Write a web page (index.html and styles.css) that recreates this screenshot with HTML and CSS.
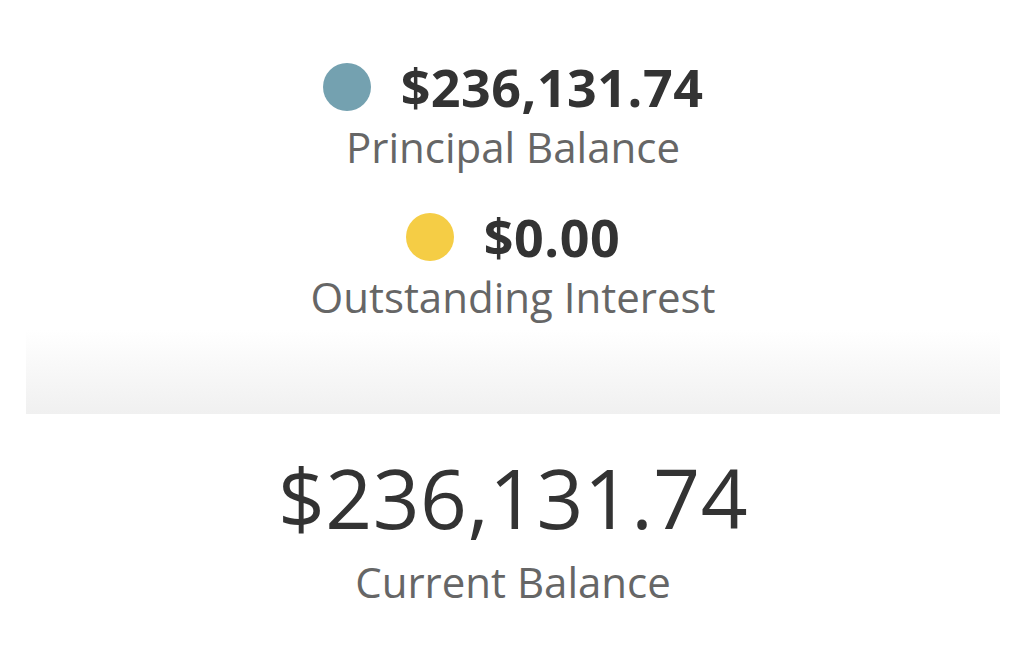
FILE: index.html
```html
<!DOCTYPE html>
<html lang="en">
<head>
    <meta charset="UTF-8">
    <meta name="viewport" content="width=device-width, initial-scale=1.0">
    <title>Loan Balance</title>
    <link rel="stylesheet" href="styles.css">
</head>
<body>
    <div class="summary">
        <div class="breakdown">
            <div class="item">
                <div class="amount-row">
                    <span class="dot principal"></span>
                    <span class="amount">$236,131.74</span>
                </div>
                <div class="label">Principal Balance</div>
            </div>
            <div class="item">
                <div class="amount-row">
                    <span class="dot interest"></span>
                    <span class="amount">$0.00</span>
                </div>
                <div class="label">Outstanding Interest</div>
            </div>
        </div>
        <div class="divider"></div>
        <div class="total">
            <div class="total-amount">$236,131.74</div>
            <div class="label">Current Balance</div>
        </div>
    </div>
</body>
</html>
```

FILE: styles.css
```css
body {
    font-family: "Open Sans", "Liberation Sans", sans-serif;
    background-color: #fff;
    margin: 0;
    color: #333;
}
.summary {
    padding: 0 17px 0 26px;
    text-align: center;
}
.breakdown {
    padding-top: 57px;
}
.item + .item {
    margin-top: 30px;
}
.amount-row {
    display: flex;
    justify-content: center;
    align-items: center;
    gap: 30px;
    height: 60px;
}
.dot {
    width: 48px;
    height: 48px;
    border-radius: 50%;
    display: inline-block;
}
.dot.principal {
    background-color: #74a1b0;
}
.dot.interest {
    background-color: #f5cd45;
}
.amount {
    font-size: 52px;
    font-weight: 700;
    line-height: 60px;
    letter-spacing: 0.5px;
    color: #333;
}
.label {
    font-size: 42px;
    line-height: 60px;
    color: #666;
}
.divider {
    height: 84px;
    margin-top: 3px;
    background: linear-gradient(to bottom, #fff 0%, #f0f0f0 100%);
}
.total {
    padding-top: 33px;
}
.total-amount {
    font-size: 82px;
    line-height: 100px;
    letter-spacing: 0.5px;
    color: #333;
}
.total .label {
    margin-top: 5px;
}
```
